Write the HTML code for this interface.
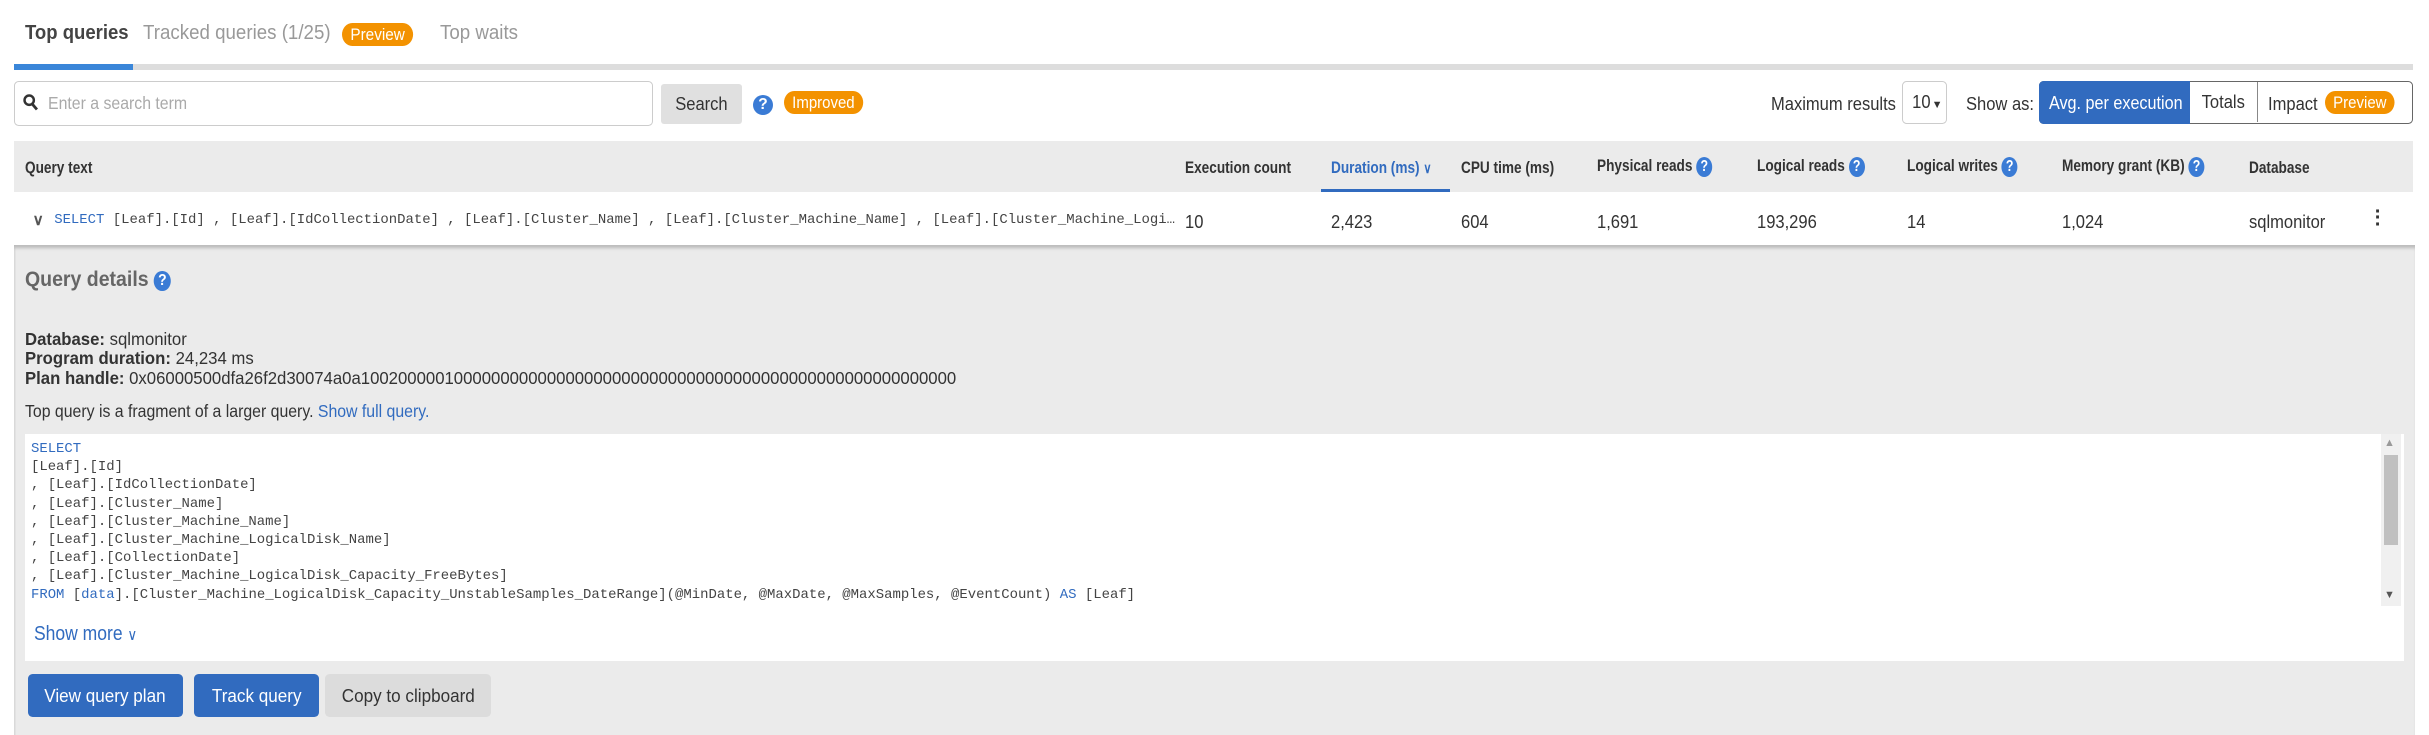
<!DOCTYPE html>
<html><head><meta charset="utf-8"><style>
html,body{margin:0;padding:0;background:#fff;overflow:hidden}
body{width:2429px;height:735px}
#r{zoom:1.5491;position:relative;width:1568px;height:475px;font-family:"Liberation Sans",Arial,sans-serif;color:#333;font-size:12px}
.a{position:absolute;white-space:nowrap;transform-origin:0 50%}
.s{transform:scaleX(.89)}
.badge{background:#f39200;color:#fff;border-radius:9px;padding:1px 6px;font-size:11px}
.q{display:inline-block;width:13px;height:13px;border-radius:50%;background:#3a7bd5;color:#fff;font-size:10px;font-weight:bold;text-align:center;line-height:13px;vertical-align:middle}
.th{font-weight:bold;font-size:11px;color:#333;transform:scaleX(.8)}
.mono{font-family:"Liberation Mono",monospace;font-size:9px;color:#444}
.btn{position:absolute;top:435px;height:28px;line-height:28px;border-radius:3px;text-align:center;font-size:12px}
.btn span{display:inline-block;transform:scaleX(.92)}
</style></head><body><div id="r">
<div class="a" style="left:16px;top:14px;font-size:13px;font-weight:bold;color:#444;transform:scaleX(.92)">Top queries</div>
<div class="a" style="left:92px;top:14px;font-size:13px;color:#999;transform:scaleX(.93)">Tracked queries (1/25)</div>
<div class="a badge" style="left:221px;top:15px;transform:scaleX(.9)">Preview</div>
<div class="a" style="left:284px;top:14px;font-size:13px;color:#999;transform:scaleX(.93)">Top waits</div>
<div class="a" style="left:9px;top:41px;width:1549px;height:4px;background:#ddd"></div>
<div class="a" style="left:9px;top:41px;width:77px;height:4px;background:#3a86d9"></div>

<div class="a" style="left:9px;top:52px;width:411px;height:28px;border:1px solid #ccc;border-radius:3px"></div>
<svg class="a" style="left:15px;top:61px" width="10" height="11" viewBox="0 0 10 11"><circle cx="4" cy="4" r="3" fill="none" stroke="#333" stroke-width="1.6"/><path d="M6 6.5L9 10" stroke="#333" stroke-width="1.8"/></svg>
<div class="a s" style="left:31px;top:60px;color:#aaa;font-size:11.5px">Enter a search term</div>
<div class="a" style="left:427px;top:54px;width:52px;height:26px;background:#e0e0e0;border-radius:2px;text-align:center;line-height:26px"><span style="display:inline-block;transform:scaleX(.89)">Search</span></div>
<div class="a" style="left:486px;top:60px"><span class="q">?</span></div>
<div class="a badge" style="left:506px;top:59px;transform:scaleX(.88)">Improved</div>

<div class="a s" style="left:1143px;top:60px">Maximum results</div>
<div class="a" style="left:1228px;top:52px;width:29px;height:28px;border:1px solid #ccc;border-radius:3px;box-sizing:border-box;line-height:26px;padding-left:5px"><span style="display:inline-block;transform:scaleX(.89)">10</span><span style="font-size:7px">▼</span></div>
<div class="a s" style="left:1269px;top:60px">Show as:</div>
<div class="a" style="left:1316px;top:52px;width:242px;height:28px;border:1px solid #666;border-radius:3px;box-sizing:border-box"></div>
<div class="a" style="left:1316px;top:52px;width:98px;height:28px;background:#316bbf;color:#fff;line-height:28px;text-align:center;border-radius:3px 0 0 3px"><span style="display:inline-block;transform:scaleX(.87)">Avg. per execution</span></div>
<div class="a" style="left:1414px;top:53px;width:43px;height:26px;border-right:1px solid #888;line-height:26px;text-align:center"><span style="display:inline-block;transform:scaleX(.89)">Totals</span></div>
<div class="a s" style="left:1464px;top:60px">Impact</div>
<div class="a badge" style="left:1501px;top:59px;transform:scaleX(.88)">Preview</div>

<div class="a" style="left:9px;top:91px;width:1549px;height:33px;background:#ebebeb"></div>
<div class="a th" style="left:16px;top:102px">Query text</div>
<div class="a th" style="left:765px;top:102px">Execution count</div>
<div class="a th" style="left:859px;top:102px;color:#316bbf">Duration (ms) <span style="font-size:9px">∨</span></div>
<div class="a" style="left:853px;top:122px;width:83px;height:2px;background:#316bbf"></div>
<div class="a th" style="left:943px;top:102px">CPU time (ms)</div>
<div class="a th" style="left:1031px;top:101px">Physical reads <span class="q">?</span></div>
<div class="a th" style="left:1134px;top:101px">Logical reads <span class="q">?</span></div>
<div class="a th" style="left:1231px;top:101px">Logical writes <span class="q">?</span></div>
<div class="a th" style="left:1331px;top:101px">Memory grant (KB) <span class="q">?</span></div>
<div class="a th" style="left:1452px;top:102px">Database</div>

<div class="a" style="left:21px;top:136px;font-size:10px;color:#555;font-weight:bold">∨</div>
<div class="a mono" style="left:35px;top:137px"><span style="color:#316bbf">SELECT</span> [Leaf].[Id] , [Leaf].[IdCollectionDate] , [Leaf].[Cluster_Name] , [Leaf].[Cluster_Machine_Name] , [Leaf].[Cluster_Machine_Logi…</div>
<div class="a s" style="left:765px;top:136px">10</div>
<div class="a s" style="left:859px;top:136px">2,423</div>
<div class="a s" style="left:943px;top:136px">604</div>
<div class="a s" style="left:1031px;top:136px">1,691</div>
<div class="a s" style="left:1134px;top:136px">193,296</div>
<div class="a s" style="left:1231px;top:136px">14</div>
<div class="a s" style="left:1331px;top:136px">1,024</div>
<div class="a s" style="left:1452px;top:136px">sqlmonitor</div>
<div class="a" style="left:1533px;top:135px;font-weight:bold;font-size:13px;line-height:4px">·<br>·<br>·</div>

<div class="a" style="left:9px;top:158px;width:1550px;height:317px;background:#ebebeb;box-shadow:inset 0 3px 2px -1px #bbb, inset 1px 0 0 #ddd"></div>
<div class="a" style="left:16px;top:172px;font-size:14px;font-weight:bold;color:#666;transform:scaleX(.9)">Query details <span class="q" style="width:12px;height:13px">?</span></div>
<div class="a" style="left:16px;top:213px;line-height:12.5px;font-size:11.5px;transform:scaleX(.94)"><b>Database:</b> sqlmonitor<br><b>Program duration:</b> 24,234 ms<br><b>Plan handle:</b> 0x06000500dfa26f2d30074a0a1002000001000000000000000000000000000000000000000000000000000000</div>
<div class="a s" style="left:16px;top:259px;font-size:11.5px">Top query is a fragment of a larger query. <span style="color:#316bbf">Show full query.</span></div>

<div class="a" style="left:16px;top:280px;width:1536px;height:147px;background:#fff"></div>
<div class="a mono" style="left:20px;top:284px;line-height:11.75px"><span style="color:#316bbf">SELECT</span><br>[Leaf].[Id]<br>, [Leaf].[IdCollectionDate]<br>, [Leaf].[Cluster_Name]<br>, [Leaf].[Cluster_Machine_Name]<br>, [Leaf].[Cluster_Machine_LogicalDisk_Name]<br>, [Leaf].[CollectionDate]<br>, [Leaf].[Cluster_Machine_LogicalDisk_Capacity_FreeBytes]<br><span style="color:#316bbf">FROM</span> [<span style="color:#316bbf">data</span>].[Cluster_Machine_LogicalDisk_Capacity_UnstableSamples_DateRange](@MinDate, @MaxDate, @MaxSamples, @EventCount) <span style="color:#316bbf">AS</span> [Leaf]</div>
<div class="a" style="left:16px;top:392px;width:1520px;height:12px;background:#fff"></div>
<div class="a" style="left:1537px;top:280px;width:13px;height:111px;background:#f0f0f0"></div>
<div class="a" style="left:1539px;top:294px;width:9px;height:58px;background:#c0c0c0"></div>
<div class="a" style="left:1539px;top:282px;font-size:7px;color:#999">▲</div>
<div class="a" style="left:1539px;top:380px;font-size:7px;color:#555">▼</div>
<div class="a" style="left:22px;top:402px;font-size:13px;color:#316bbf;transform:scaleX(.87)">Show more <span style="font-size:10px">∨</span></div>

<div class="btn" style="left:18px;width:100px;background:#316bbf;color:#fff"><span>View query plan</span></div>
<div class="btn" style="left:125px;width:81px;background:#316bbf;color:#fff"><span>Track query</span></div>
<div class="btn" style="left:210px;width:107px;background:#dcdcdc;color:#333"><span>Copy to clipboard</span></div>
</div></body></html>
